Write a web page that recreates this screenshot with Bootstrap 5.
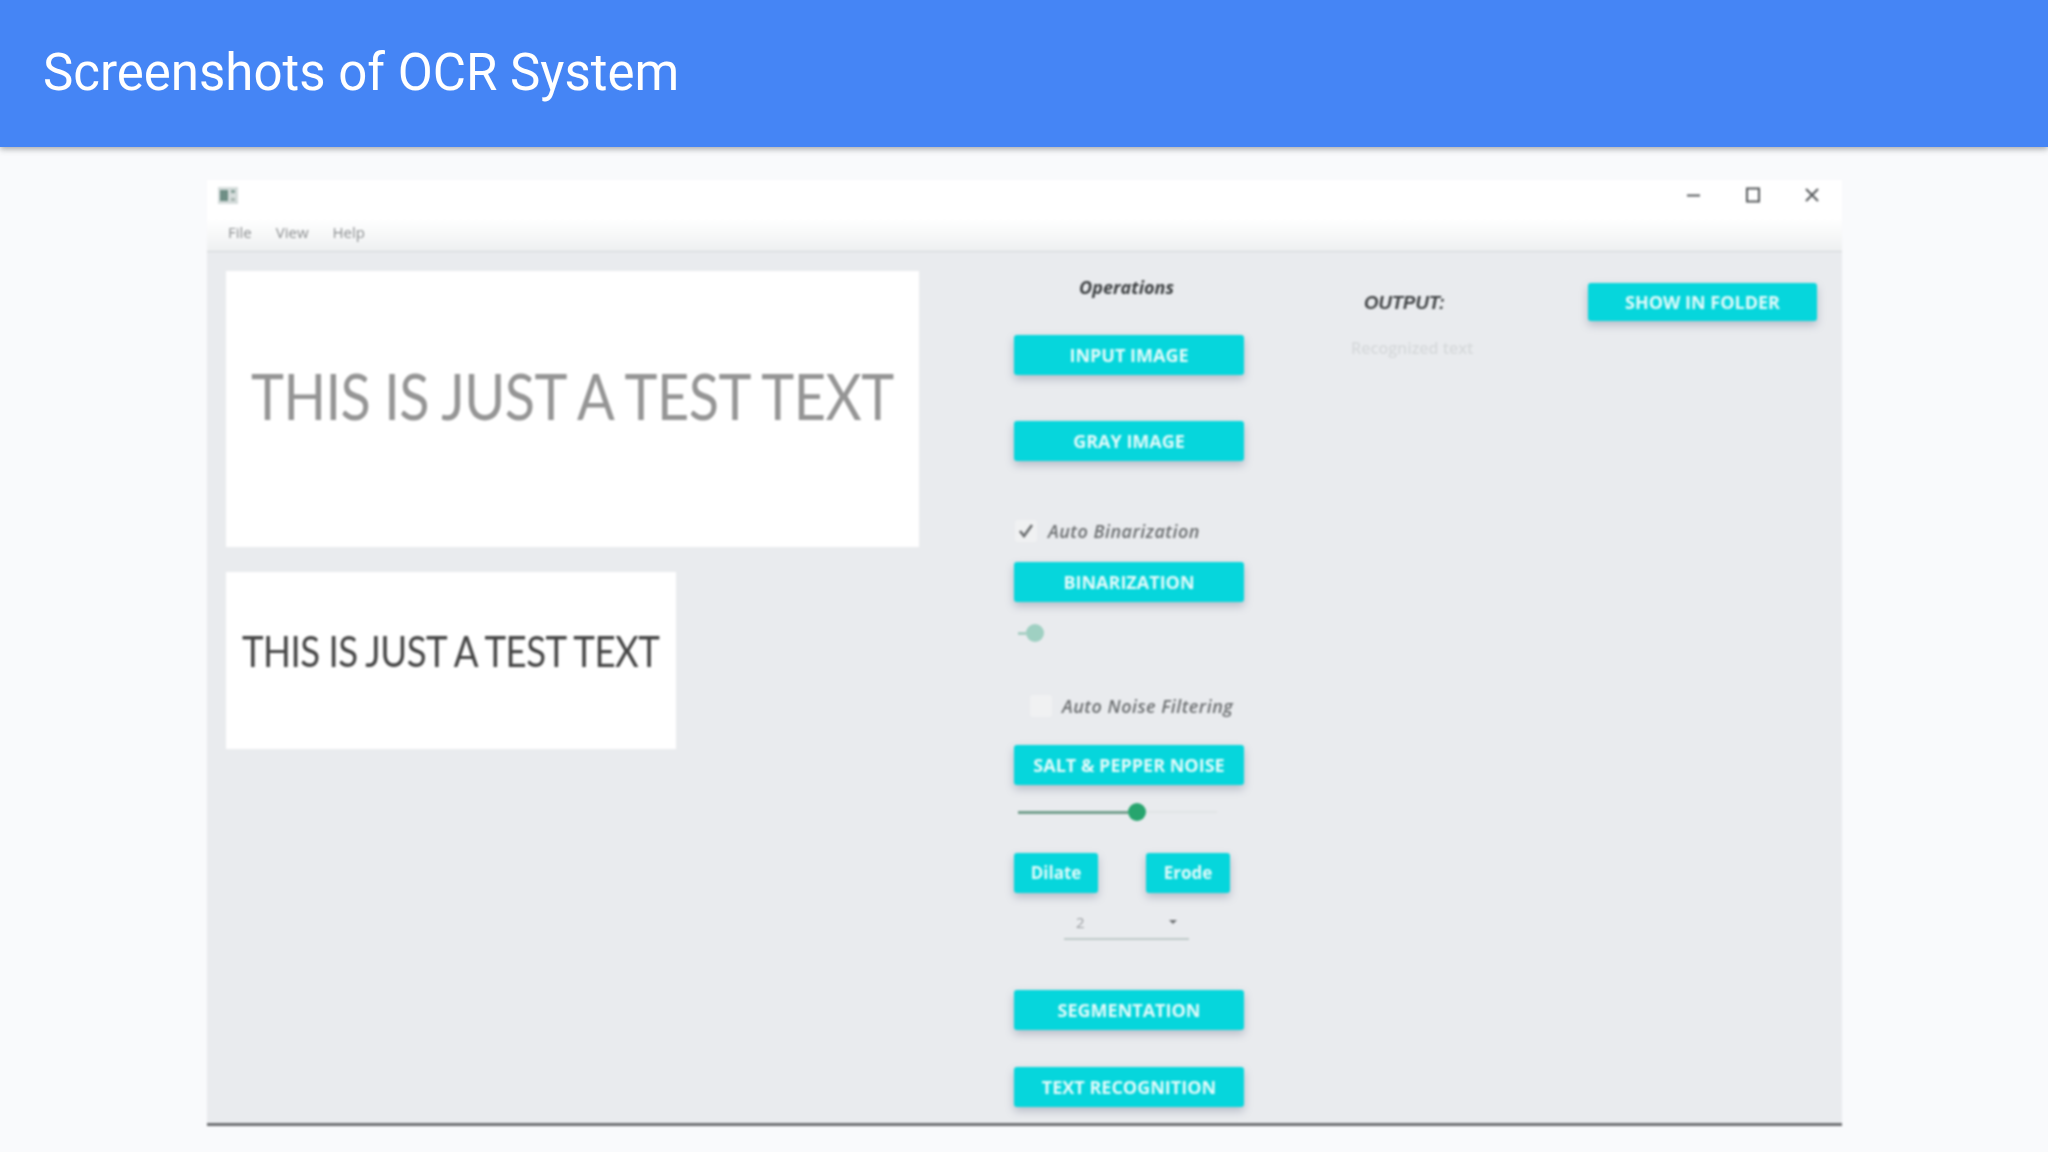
<!DOCTYPE html>
<html lang="en">
<head>
    <meta charset="UTF-8">
    <meta name="viewport" content="width=device-width, initial-scale=1.0">
    <title>Screenshots of OCR System</title>
    <link href="https://cdn.jsdelivr.net/npm/bootstrap@5.3.3/dist/css/bootstrap.min.css" rel="stylesheet" crossorigin="anonymous">
    <script src="https://cdn.jsdelivr.net/npm/bootstrap@5.3.3/dist/js/bootstrap.bundle.min.js" crossorigin="anonymous"></script>
    <style>
        html, body { height: 1152px; overflow: hidden; }
        body { background: #f9fafc; font-family: Roboto, "Liberation Sans", sans-serif; }
        .slide-head { height: 147px; background: #4585f5; box-shadow: 0 2px 6px rgba(60,64,67,.45); padding: 0 0 3px 43px; }
        .slide-head h1 { font: 400 51px Roboto, sans-serif; color: #fff; margin: 0; }
        .app-window { width: 1635px; height: 946px; margin: 33px 0 0 207px; background: #e9ebee; border-bottom: 3px solid #6d6f72; filter: blur(.9px); }
        .title-strip { height: 72px; background: linear-gradient(#fff 0, #fff 55%, #eef0f1 100%); border-bottom: 1px solid #d3d7d8; padding: 0 21px 0 11px; }
        .app-ico { width: 20px; height: 17px; margin-top: 7px; }
        .win-ctrl { gap: 41px; margin-top: 6px; }
        .menu-row { gap: 24px; margin: 18px 0 0 10px; font: 15px "Open Sans", sans-serif; color: #8b8e90; }
        .pic-col { width: 807px; padding: 19px 0 0 19px; }
        .pic-box { background: #fff; font-family: Lato, "Open Sans", sans-serif; white-space: nowrap; overflow: hidden; }
        .pic-box span { transform: scaleX(.872); transform-origin: left center; }
        .pic-one { width: 693px; height: 276px; margin-bottom: 25px; padding: 0 0 26px 25px; font-size: 64px; font-weight: 400; color: #959595; letter-spacing: -.6px; }
        .pic-two { width: 450px; height: 177px; padding: 0 0 18px 16px; font-size: 42px; font-weight: 400; color: #454545; letter-spacing: -.6px; }
        .ops-col { width: 230px; }
        .ops-title { height: 24px; margin-top: 23px; padding-right: 5px; font: italic 700 18px/24px "Open Sans", sans-serif; color: #3d4042; text-align: center; }
        .op-btn { display: block; width: 100%; height: 40px; padding: 0; background: #06d6dc; color: #e4fbfb; border: 0; border-radius: 3px; font: 700 18px/40px "Open Sans", sans-serif; box-shadow: 0 4px 8px rgba(90,100,130,.35); }
        .op-btn:hover { background: #06d6dc; color: #e4fbfb; }
        .mt-36 { margin-top: 36px; }
        .mt-46 { margin-top: 46px; }
        .mt-22 { margin-top: 22px; }
        .mt-28 { margin-top: 28px; }
        .mt-52 { margin-top: 50px; }
        .mt-37 { margin-top: 37px; }
        .check-line { height: 22px; font: italic 600 18px/22px "Open Sans", sans-serif; color: #6b6e70; letter-spacing: .5px; white-space: nowrap; }
        .check-one { margin-top: 59px; padding-left: 1px; gap: 11px; margin-bottom: -2px; }
        .check-two { margin-top: 53px; padding-left: 16px; gap: 10px; }
        .tick-box { width: 22px; height: 22px; background: #f0f1f2; border-radius: 3px; flex: none; }
        .slide-one { height: 18px; margin-top: 22px; padding-left: 4px; }
        .slide-two { height: 18px; margin-top: 18px; padding-left: 4px; width: 203px; }
        .fill-a { height: 3px; background: #a9cfc4; }
        .knob-a { width: 18px; height: 18px; border-radius: 50%; background: #9fd0c2; flex: none; }
        .fill-b { height: 3px; background: #74a08e; }
        .knob-b { width: 18px; height: 18px; border-radius: 50%; background: #27a56e; flex: none; }
        .rest-b { height: 2px; background: #e1e4e5; }
        .pair-row { margin-top: 32px; padding-right: 14px; }
        .pair-row .op-btn { width: 84px; font-size: 17px; }
        .combo-box { width: 125px; height: 35px; margin: 12px 0 0 50px; padding: 0 12px; border-bottom: 2px solid #bfc9c8; font: 15px/34px "Open Sans", sans-serif; color: #9a9da0; }
        .combo-arrow { width: 0; height: 0; border-left: 4px solid transparent; border-right: 4px solid transparent; border-top: 4px solid #6f7274; }
        .out-col { padding: 31px 25px 0 0; }
        .out-label { margin-left: 120px; font: italic 700 18.5px/39px "Liberation Sans", sans-serif; color: #3d4042; }
        .out-btn { width: 229px; height: 38px; line-height: 38px; }
        .out-faint { margin: 15px 0 0 107px; font: 600 16px/22px "Open Sans", sans-serif; color: #d6d9db; }
    </style>
</head>
<body>
    <header class="slide-head d-flex align-items-center">
        <h1>Screenshots of OCR System</h1>
    </header>

    <main class="app-window d-flex flex-column">
        <div class="title-strip">
            <div class="d-flex justify-content-between">
                <svg class="app-ico" viewBox="0 0 20 17">
                    <rect width="20" height="17" fill="#d5dcdb"/>
                    <rect x="2" y="3" width="8" height="11" fill="#6f8f86"/>
                    <rect x="13" y="3" width="4" height="3" fill="#8aa39c"/>
                    <rect x="13" y="11" width="4" height="3" fill="#a9b7b3"/>
                </svg>
                <div class="win-ctrl d-flex">
                    <svg width="18" height="18" viewBox="0 0 18 18"><path d="M2 9.5h13" stroke="#55585a" stroke-width="2"/></svg>
                    <svg width="18" height="18" viewBox="0 0 18 18"><rect x="3" y="2.5" width="12" height="13" fill="none" stroke="#55585a" stroke-width="2"/></svg>
                    <svg width="18" height="18" viewBox="0 0 18 18"><path d="M3 3l12 12M15 3L3 15" stroke="#55585a" stroke-width="2"/></svg>
                </div>
            </div>
            <div class="menu-row d-flex">
                <span>File</span><span>View</span><span>Help</span>
            </div>
        </div>

        <div class="d-flex flex-grow-1">
            <section class="pic-col">
                <div class="pic-box pic-one d-flex align-items-center"><span>THIS IS JUST A TEST TEXT</span></div>
                <div class="pic-box pic-two d-flex align-items-center"><span>THIS IS JUST A TEST TEXT</span></div>
            </section>

            <section class="ops-col">
                <div class="ops-title">Operations</div>
                <button class="btn op-btn mt-36">INPUT IMAGE</button>
                <button class="btn op-btn mt-46">GRAY IMAGE</button>

                <div class="check-line check-one d-flex">
                    <span class="tick-box d-flex align-items-center justify-content-center">
                        <svg width="16" height="14" viewBox="0 0 16 14"><path d="M2 7l4 5 8-11" fill="none" stroke="#6a6d6f" stroke-width="2.6"/></svg>
                    </span>
                    <span>Auto Binarization</span>
                </div>
                <button class="btn op-btn mt-22">BINARIZATION</button>
                <div class="slide-one d-flex align-items-center">
                    <div class="fill-a" style="width: 8px"></div>
                    <div class="knob-a"></div>
                </div>

                <div class="check-line check-two d-flex">
                    <span class="tick-box"></span>
                    <span>Auto Noise Filtering</span>
                </div>
                <button class="btn op-btn mt-28">SALT &amp; PEPPER NOISE</button>
                <div class="slide-two d-flex align-items-center">
                    <div class="fill-b" style="width: 110px"></div>
                    <div class="knob-b"></div>
                    <div class="rest-b flex-grow-1"></div>
                </div>

                <div class="pair-row d-flex justify-content-between">
                    <button class="btn op-btn">Dilate</button>
                    <button class="btn op-btn">Erode</button>
                </div>
                <div class="combo-box d-flex justify-content-between align-items-center">
                    <span>2</span>
                    <span class="combo-arrow"></span>
                </div>

                <button class="btn op-btn mt-52">SEGMENTATION</button>
                <button class="btn op-btn mt-37">TEXT RECOGNITION</button>
            </section>

            <section class="out-col flex-grow-1">
                <div class="d-flex justify-content-between">
                    <span class="out-label">OUTPUT:</span>
                    <button class="btn op-btn out-btn">SHOW IN FOLDER</button>
                </div>
                <div class="out-faint">Recognized text</div>
            </section>
        </div>
    </main>
</body>
</html>
